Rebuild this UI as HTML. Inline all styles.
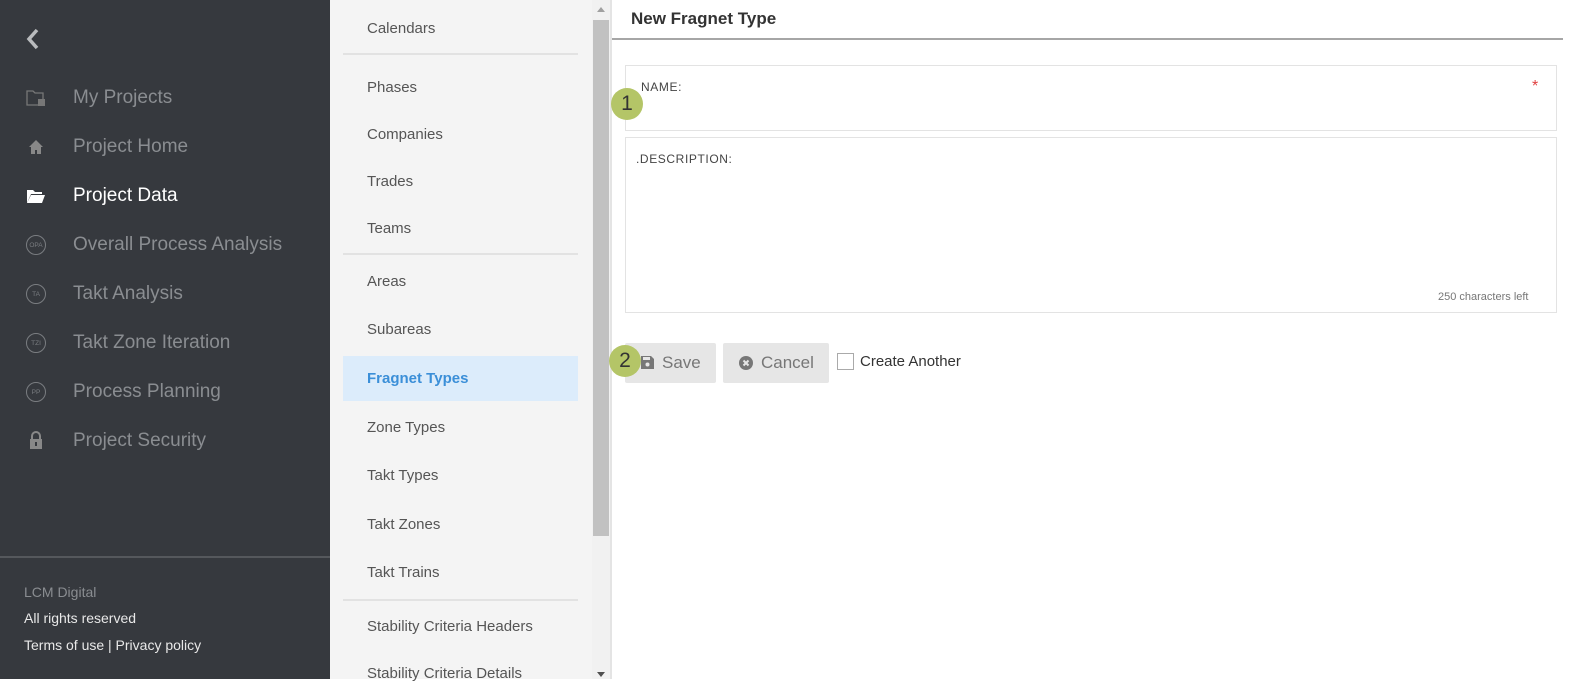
<!DOCTYPE html>
<html><head><style>
*{margin:0;padding:0;box-sizing:border-box}
body{width:1571px;height:679px;overflow:hidden;font-family:"Liberation Sans",Arial,sans-serif;background:#fff;position:relative}
.a{position:absolute}
#sb{left:0;top:0;width:330px;height:679px;background:#36393e}
.nav{position:absolute;left:73px;font-size:19px;color:#8a8d91;white-space:nowrap}
.ic{position:absolute;left:26px;width:20px;height:20px}
.circ{border:1.3px solid #7a7d81;border-radius:50%;color:#7a7d81;font-size:6.5px;display:flex;align-items:center;justify-content:center}
#sub{left:330px;top:0;width:262px;height:679px;background:#f4f4f4}
.si{position:absolute;left:37px;font-size:15px;color:#555}
.dv{position:absolute;left:13px;width:235px;height:2px;background:#e2e2e2}
.g{position:absolute;width:32px;height:32px;border-radius:50%;background:#b4c567;color:#333;font-size:21px;text-align:center;line-height:32px}
.btn{position:absolute;top:343px;height:40px;background:#e6e6e6;border-radius:2px;color:#777;font-size:17px;line-height:40px}
</style></head><body>
<div id="sb" class="a">
 <svg class="a" style="left:25px;top:28px" width="16" height="22"><path d="M12 2 L4 11 L12 20" stroke="#b9bbbd" stroke-width="3.5" fill="none"/></svg>
 <svg class="ic" style="top:88px" viewBox="0 0 20 20"><path d="M1 3h6l2 2h8v12H1z" fill="none" stroke="#777" stroke-width="1.3"/><rect x="12" y="11" width="7" height="7" fill="#777"/></svg>
 <div class="nav" style="top:87px">My Projects</div>
 <svg class="ic" style="top:137px" viewBox="0 0 20 20"><path d="M3 10L10 3l7 7h-2v7h-4v-4H9v4H5v-7z" fill="#888"/></svg>
 <div class="nav" style="top:136px">Project Home</div>
 <svg class="ic" style="top:186px" viewBox="0 0 20 20"><path d="M1 4h6l2 2h7v2H5L1 17z" fill="#fff"/><path d="M5 9h14l-3 8H1z" fill="#fff"/></svg>
 <div class="nav" style="top:185px;color:#fff">Project Data</div>
 <div class="ic circ" style="top:235px">OPA</div>
 <div class="nav" style="top:234px">Overall Process Analysis</div>
 <div class="ic circ" style="top:284px">TA</div>
 <div class="nav" style="top:283px">Takt Analysis</div>
 <div class="ic circ" style="top:333px">TZI</div>
 <div class="nav" style="top:332px">Takt Zone Iteration</div>
 <div class="ic circ" style="top:382px">PP</div>
 <div class="nav" style="top:381px">Process Planning</div>
 <svg class="ic" style="top:430px" viewBox="0 0 20 20"><path d="M6 9V6a4 4 0 0 1 8 0v3" fill="none" stroke="#888" stroke-width="2"/><rect x="4" y="9" width="12" height="10" fill="#888"/><rect x="9" y="12" width="2" height="4" fill="#36393e"/></svg>
 <div class="nav" style="top:430px">Project Security</div>
 <div class="a" style="left:0;top:556px;width:330px;height:2px;background:#55585c"></div>
 <div class="a" style="left:24px;top:584px;font-size:14px;color:#8a8d91">LCM Digital</div>
 <div class="a" style="left:24px;top:610px;font-size:14px;color:#e8e8e8">All rights reserved</div>
 <div class="a" style="left:24px;top:637px;font-size:14px;color:#e8e8e8">Terms of use | Privacy policy</div>
</div>
<div id="sub" class="a">
 <div class="si" style="top:20px">Calendars</div>
 <div class="dv" style="top:53px"></div>
 <div class="si" style="top:79px">Phases</div>
 <div class="si" style="top:126px">Companies</div>
 <div class="si" style="top:173px">Trades</div>
 <div class="si" style="top:220px">Teams</div>
 <div class="dv" style="top:253px"></div>
 <div class="si" style="top:273px">Areas</div>
 <div class="si" style="top:321px">Subareas</div>
 <div class="a" style="left:13px;top:356px;width:235px;height:45px;background:#dcecfb"></div>
 <div class="si" style="top:370px;color:#3b8fd8;font-weight:bold">Fragnet Types</div>
 <div class="si" style="top:419px">Zone Types</div>
 <div class="si" style="top:467px">Takt Types</div>
 <div class="si" style="top:516px">Takt Zones</div>
 <div class="si" style="top:564px">Takt Trains</div>
 <div class="dv" style="top:599px"></div>
 <div class="si" style="top:618px">Stability Criteria Headers</div>
 <div class="si" style="top:665px">Stability Criteria Details</div>
</div>
<div class="a" style="left:592px;top:0;width:18px;height:679px;background:#f1f1f1"></div>
<div class="a" style="left:593px;top:20px;width:16px;height:516px;background:#c1c1c1"></div>
<svg class="a" style="left:596px;top:6px" width="10" height="8"><path d="M1 6L5 1L9 6z" fill="#a0a0a0"/></svg>
<svg class="a" style="left:596px;top:671px" width="10" height="8"><path d="M1 1L5 6L9 1z" fill="#505050"/></svg>
<div class="a" style="left:610px;top:0;width:2px;height:679px;background:#e4e4e4"></div>
<div class="a" style="left:631px;top:9px;font-size:17px;font-weight:bold;color:#333">New Fragnet Type</div>
<div class="a" style="left:612px;top:38px;width:951px;height:2px;background:#a6a6a6"></div>
<div class="a" style="left:625px;top:65px;width:932px;height:66px;border:1px solid #e3e3e3"></div>
<div class="a" style="left:641px;top:80px;font-size:12px;color:#444;letter-spacing:.6px">NAME:</div>
<div class="a" style="left:1532px;top:78px;font-size:16px;color:#e04040">*</div>
<div class="a" style="left:625px;top:137px;width:932px;height:176px;border:1px solid #e3e3e3"></div>
<div class="a" style="left:636px;top:152px;font-size:12px;color:#444;letter-spacing:.6px">.DESCRIPTION:</div>
<div class="a" style="left:1438px;top:291px;font-size:11px;color:#777">250 characters left</div>
<div class="btn" style="left:625px;width:91px"><svg class="a" style="left:16px;top:13px" width="13" height="13" viewBox="0 0 13 13"><path d="M0 0h10l3 3v10H0z" fill="#777"/><rect x="2" y="1" width="7" height="3" fill="#e6e6e6"/><circle cx="6.5" cy="8.5" r="2" fill="#e6e6e6"/></svg><span class="a" style="left:37px;top:0">Save</span></div>
<div class="btn" style="left:723px;width:106px"><svg class="a" style="left:16px;top:13px" width="14" height="14" viewBox="0 0 14 14"><circle cx="7" cy="7" r="7" fill="#777"/><path d="M4.5 4.5l5 5M9.5 4.5l-5 5" stroke="#e6e6e6" stroke-width="2"/></svg><span class="a" style="left:38px;top:0">Cancel</span></div>
<div class="a" style="left:837px;top:353px;width:17px;height:17px;border:1px solid #aaa;background:#fff"></div>
<div class="a" style="left:860px;top:353px;font-size:15px;color:#333">Create Another</div>
<div class="g" style="left:611px;top:88px">1</div>
<div class="g" style="left:609px;top:345px">2</div>
</body></html>
